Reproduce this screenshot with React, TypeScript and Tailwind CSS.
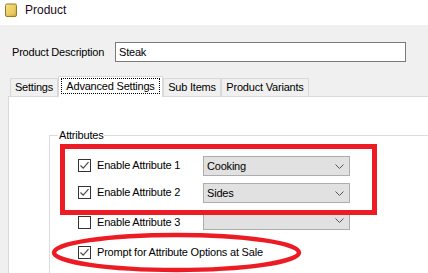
import React from "react";

const font = { fontFamily: '"Liberation Sans", Arial, sans-serif' };

function Check({ checked }: { checked: boolean }) {
  return (
    <div className="w-[13px] h-[13px] border border-[#333333] bg-white flex items-center justify-center shrink-0">
      {checked && (
        <svg width="11" height="11" viewBox="0 0 11 11">
          <path d="M1.5 5.5 L4.2 8.2 L9.5 2.2" fill="none" stroke="#4a4a4a" strokeWidth="1.2" />
        </svg>
      )}
    </div>
  );
}

function Combo({ value }: { value: string }) {
  return (
    <div className="w-[147px] h-[20px] bg-[#e1e1e1] border border-[#adadad] flex items-center justify-between pl-[3px] pr-[5px]">
      <span className="text-[11px] tracking-[-0.2px] text-black leading-none">{value}</span>
      <svg width="9" height="5" viewBox="0 0 9 5">
        <path d="M0.5 0.5 L4.5 4.5 L8.5 0.5" fill="none" stroke="#555555" strokeWidth="1" />
      </svg>
    </div>
  );
}

function Tab({ label, w }: { label: string; w: string }) {
  return (
    <div
      className={`${w} h-[18px] mb-[1px] bg-[#f0f0f0] border border-b-0 border-[#d9d9d9] flex items-center justify-center text-[11px] tracking-[-0.2px] text-black`}
    >
      {label}
    </div>
  );
}

export default function App() {
  return (
    <div className="relative w-[428px] h-[273px] overflow-hidden bg-[#f0f0f0] text-black" style={font}>
      {/* title bar */}
      <div className="h-[25px] bg-white flex items-start pt-[3px] pl-[5px]">
        <svg width="12" height="14" viewBox="0 0 12 14">
          <defs>
            <linearGradient id="g" x1="0" y1="0" x2="1" y2="1">
              <stop offset="0" stopColor="#f7e7a0" />
              <stop offset="1" stopColor="#d4ad35" />
            </linearGradient>
          </defs>
          <path d="M2 1 H10 Q11.5 1 11.5 2.5 V12 Q11.5 13.5 10 13.5 H2 Q0.5 13.5 0.5 12 V2.5 Q0.5 1 2 1 Z" fill="url(#g)" stroke="#9c7a1c" strokeWidth="1" />
          <path d="M2.5 3 H9.5 V11 H2.5 Z" fill="#f2d660" opacity="0.6" />
        </svg>
        <span className="ml-[8px] text-[12px] leading-[14px] text-[#1a0a1a]">Product</span>
      </div>

      {/* description row */}
      <div className="mt-[17px] h-[20px] flex items-center">
        <span className="pl-[12px] w-[115px] text-[11px] tracking-[-0.2px]">Product Description</span>
        <div className="w-[291px] h-[20px] border border-[#7a7a7a] bg-white flex items-center pl-[3px] text-[11px] tracking-[-0.2px]">
          Steak
        </div>
      </div>

      {/* tabs */}
      <div className="relative z-10 mt-[14px] mb-[-1px] h-[21px] flex items-end pl-[10px]">
        <Tab label="Settings" w="w-[48px]" />
        <div className="w-[105px] h-[21px] bg-white border border-b-0 border-[#d9d9d9] flex items-start justify-center pt-[1px]">
          <div className="h-[16px] px-[4px] border border-dotted border-black flex items-center text-[11px] tracking-[-0.2px]">
            Advanced Settings
          </div>
        </div>
        <Tab label="Sub Items" w="w-[58px]" />
        <Tab label="Product Variants" w="w-[88px]" />
      </div>

      {/* tab panel */}
      <div className="ml-[8px] h-[200px] bg-white border-l border-t border-[#d9d9d9] pt-[38px] pl-[40px]">
        <div className="relative h-[200px] border-l border-t border-[#dcdcdc] pt-[20px] pl-[28px]">
          <span className="absolute left-[8px] top-[-8px] bg-white px-[1px] text-[11px] tracking-[-0.2px] leading-[14px]">
            Attributes
          </span>

          <div className="flex">
            <div className="w-[125px] flex items-center gap-[6px] mt-[3px] h-[13px]">
              <Check checked />
              <span className="text-[11px] tracking-[-0.2px]">Enable Attribute 1</span>
            </div>
            <Combo value="Cooking" />
          </div>

          <div className="flex mt-[7px]">
            <div className="w-[125px] flex items-center gap-[6px] mt-[3px] h-[13px]">
              <Check checked />
              <span className="text-[11px] tracking-[-0.2px]">Enable Attribute 2</span>
            </div>
            <Combo value="Sides" />
          </div>

          <div className="flex mt-[7px]">
            <div className="w-[125px] flex items-center gap-[6px] mt-[6px] h-[13px]">
              <Check checked={false} />
              <span className="text-[11px] tracking-[-0.2px]">Enable Attribute 3</span>
            </div>
            <Combo value="" />
          </div>

          <div className="flex items-center gap-[6px] mt-[16px] h-[13px]">
            <Check checked />
            <span className="text-[11px] tracking-[-0.2px]">Prompt for Attribute Options at Sale</span>
          </div>
        </div>
      </div>

      {/* annotations */}
      <div className="absolute left-[60px] top-[144px] w-[317px] h-[71px] border-[5px] border-[#ed1c24] pointer-events-none" />
      <svg className="absolute left-0 top-0 pointer-events-none" width="428" height="273" viewBox="0 0 428 273">
        <ellipse cx="176.5" cy="252.5" rx="122.5" ry="17.5" fill="none" stroke="#ed1c24" strokeWidth="4.5" />
      </svg>
    </div>
  );
}
